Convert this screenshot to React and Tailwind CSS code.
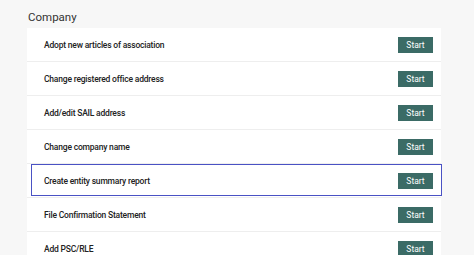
const actions = [
  "Adopt new articles of association",
  "Change registered office address",
  "Add/edit SAIL address",
  "Change company name",
  "Create entity summary report",
  "File Confirmation Statement",
  "Add PSC/RLE",
];

export default function App() {
  return (
    <div
      className="w-[474px] h-[255px] overflow-hidden bg-[#f7f7f7] pl-[27px] pt-[9px]"
      style={{ fontFamily: 'Roboto, "Liberation Sans", sans-serif' }}
    >
      <h2 className="text-[11.5px] leading-[16px] text-[#333] pl-px mb-[3px]">Company</h2>
      <div className="w-[414px] bg-white">
        {actions.map((label, i) => (
          <div
            key={label}
            className="relative h-[34px] flex items-center justify-between pl-[17px] pr-[8px] border-b border-[#eeeeee]"
          >
            {i === 4 && (
              <span className="absolute left-[4px] -right-[1px] top-0 bottom-[1px] border-[1.5px] border-[#4a52c4]" />
            )}
            <span className="pt-px text-[8.5px] font-medium text-[#222] tracking-[-0.2px]">{label}</span>
            <button className="mt-px w-[35px] h-[16px] bg-[#3b6b66] text-white text-[8.5px] leading-none">
              Start
            </button>
          </div>
        ))}
      </div>
    </div>
  );
}
